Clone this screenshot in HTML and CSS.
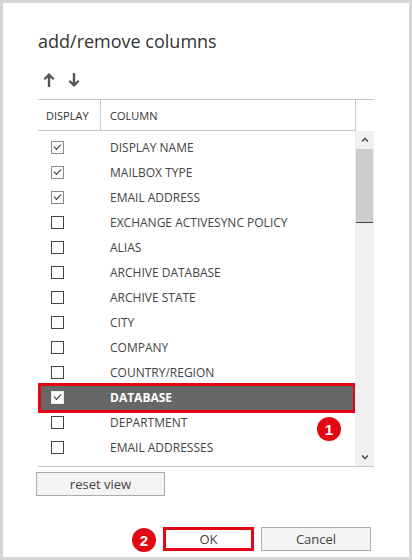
FILE: index.html
```html
<!DOCTYPE html>
<html>
<head>
    <title>add/remove columns</title>
    <link rel="stylesheet" href="styles.css">
</head>
<body>
    <div class="dialog">
        <h1 class="title">add/remove columns</h1>

        <div class="toolbar">
            <svg class="arrow" viewBox="0 0 12 16"><path d="M6 1 L11.5 6.6 L9.9 8.1 L7.2 5.4 V15 H4.8 V5.4 L2.1 8.1 L0.5 6.6 Z"/></svg>
            <svg class="arrow" viewBox="0 0 12 16"><path d="M6 15 L11.5 9.4 L9.9 7.9 L7.2 10.6 V1 H4.8 V10.6 L2.1 7.9 L0.5 9.4 Z"/></svg>
        </div>

        <div class="grid">
            <div class="head">
                <div class="head-cells">
                    <div class="h-display">DISPLAY</div>
                    <div class="h-column">COLUMN</div>
                </div>
            </div>
            <div class="body">
                <div class="list">
                    <div class="row"><span class="check on"></span><span class="name">DISPLAY NAME</span></div>
                    <div class="row"><span class="check on"></span><span class="name">MAILBOX TYPE</span></div>
                    <div class="row"><span class="check on"></span><span class="name">EMAIL ADDRESS</span></div>
                    <div class="row"><span class="check"></span><span class="name">EXCHANGE ACTIVESYNC POLICY</span></div>
                    <div class="row"><span class="check"></span><span class="name">ALIAS</span></div>
                    <div class="row"><span class="check"></span><span class="name">ARCHIVE DATABASE</span></div>
                    <div class="row"><span class="check"></span><span class="name">ARCHIVE STATE</span></div>
                    <div class="row"><span class="check"></span><span class="name">CITY</span></div>
                    <div class="row"><span class="check"></span><span class="name">COMPANY</span></div>
                    <div class="row"><span class="check"></span><span class="name">COUNTRY/REGION</span></div>
                    <div class="row selected"><span class="check on"></span><span class="name">DATABASE</span></div>
                    <div class="row"><span class="check"></span><span class="name">DEPARTMENT</span></div>
                    <div class="row"><span class="check"></span><span class="name">EMAIL ADDRESSES</span></div>
                    <div class="row"><span class="check"></span></div>
                </div>
                <div class="scroll">
                    <div class="sb-btn">
                        <svg viewBox="0 0 8 5"><path d="M1 4.5 L4 1.5 L7 4.5" /></svg>
                    </div>
                    <div class="sb-thumb"></div>
                    <div class="sb-track"></div>
                    <div class="sb-btn">
                        <svg viewBox="0 0 8 5"><path d="M1 0.5 L4 3.5 L7 0.5" /></svg>
                    </div>
                </div>
            </div>
        </div>

        <button class="btn reset">reset view</button>

        <div class="footer">
            <button class="btn ok">OK</button>
            <button class="btn cancel">Cancel</button>
        </div>

        <span class="badge b1">1</span>
        <span class="badge b2">2</span>
    </div>
</body>
</html>
```

FILE: styles.css
```css
body {
    margin: 0;
    background: #fff;
    font-family: 'Open Sans', 'Liberation Sans', sans-serif;
    color: #333;
}

.dialog {
    position: relative;
    width: 412px;
    height: 560px;
    box-sizing: border-box;
    border: 3px solid #d6d6d6;
    padding: 0 35px;
    background: #fff;
}

.title {
    margin: 26px 0 0;
    font-size: 18px;
    line-height: 24px;
    font-weight: 400;
    color: #333;
}

.toolbar {
    display: flex;
    gap: 13px;
    margin: 19px 0 0 5px;
    height: 16px;
}

.arrow {
    width: 12px;
    height: 16px;
    fill: #555;
}

.grid {
    margin-top: 11px;
    width: 336px;
}

.head {
    border-top: 1px solid #c8c8c8;
}

.head-cells {
    display: flex;
    width: 317px;
    height: 30px;
    border-right: 1px solid #c8c8c8;
    border-bottom: 1px solid #c8c8c8;
    font-size: 11px;
    color: #333;
}

.h-display {
    width: 63px;
    border-right: 1px solid #c8c8c8;
    display: flex;
    align-items: center;
    padding-left: 8px;
    box-sizing: border-box;
}

.h-column {
    flex: 1;
    display: flex;
    align-items: center;
    padding-left: 9px;
}

.body {
    display: flex;
    height: 335px;
    border-bottom: 1px solid #c8c8c8;
}

.list {
    width: 317px;
    overflow: hidden;
    padding-top: 4px;
    box-sizing: border-box;
}

.row {
    position: relative;
    display: flex;
    align-items: center;
    height: 25px;
    font-size: 12px;
    color: #444;
}

.check {
    width: 11px;
    height: 11px;
    border: 1px solid #444;
    margin: 0 46px 0 13px;
    flex: none;
    position: relative;
    background: #fff;
}

.check.on {
    border-color: #8a8a8a;
}

.check.on::after {
    content: '';
    position: absolute;
    left: 2px;
    top: 2px;
    width: 6px;
    height: 3px;
    border-left: 1px solid #333;
    border-bottom: 1px solid #333;
    transform: rotate(-45deg);
}

.row.selected {
    background: #666;
    color: #fff;
    font-weight: 700;
}

.row.selected .check {
    border-color: #eee;
}

/* annotation box */
.row.selected::after {
    content: '';
    position: absolute;
    left: 0;
    right: -1px;
    top: -2px;
    bottom: -3px;
    border: 3px solid #e30613;
}

.scroll {
    width: 19px;
    background: #f0f0f0;
    display: flex;
    flex-direction: column;
}

.sb-btn {
    height: 17px;
    display: flex;
    align-items: center;
    justify-content: center;
}

.sb-btn svg {
    width: 8px;
    height: 5px;
    fill: none;
    stroke: #555;
    stroke-width: 1.6;
}

.sb-thumb {
    height: 73px;
    margin: 1px 1px 0;
    background: #cdcdcd;
    border-bottom: 1px solid #444;
}

.sb-track {
    flex: 1;
}

.btn {
    font-family: 'Open Sans', 'Liberation Sans', sans-serif;
    font-size: 13px;
    color: #444;
    background: #f3f3f3;
    border: 1px solid #ababab;
    height: 24px;
    padding: 0;
    box-sizing: border-box;
}

.reset {
    display: block;
    width: 129px;
    margin: 5px 0 0 -2px;
}

.footer {
    display: flex;
    justify-content: flex-end;
    gap: 7px;
    margin: 31px 3px 0 0;
}

.ok {
    width: 91px;
    background: #fff;
    border: 3px solid #e30613;
}

.cancel {
    width: 110px;
}

.badge {
    position: absolute;
    width: 24px;
    height: 24px;
    border-radius: 50%;
    background: #e30613;
    color: #fff;
    font-family: 'Liberation Sans', sans-serif;
    font-weight: 700;
    font-size: 15px;
    display: flex;
    align-items: center;
    justify-content: center;
}

.b1 {
    left: 314px;
    top: 414px;
}

.b2 {
    left: 129px;
    top: 525px;
}
```
